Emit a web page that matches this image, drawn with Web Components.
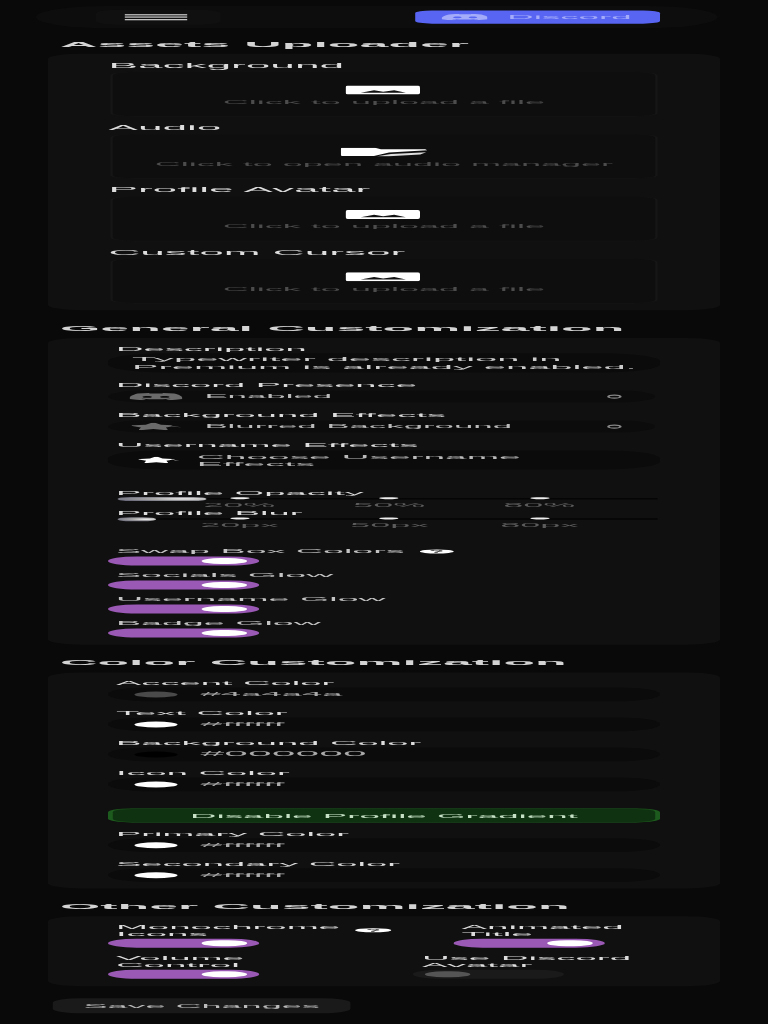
<!DOCTYPE html>
<html lang="en"><head><meta charset="utf-8"><title>Settings</title>
<style>
html,body{margin:0;padding:0;height:1024px;overflow:hidden;background:#090909;}
body{font-family:"Liberation Sans",Arial,sans-serif;color:#ccc;}
</style></head>
<body>
<app-page>
  <nav-bar></nav-bar>
  <section-block heading="Assets Uploader" style="--mt:16px;--pt:18px;--pb:18px;--px:25.4px">
    <field-label>Background</field-label>
    <upload-zone kind="image" text="Click to upload a file"></upload-zone>
    <field-label style="--lmt:16px" flush>Audio</field-label>
    <upload-zone kind="folder" text="Click to open audio manager"></upload-zone>
    <field-label style="--lmt:16px" flush>Profile Avatar</field-label>
    <upload-zone kind="image" text="Click to upload a file"></upload-zone>
    <field-label style="--lmt:16px" flush>Custom Cursor</field-label>
    <upload-zone kind="image" text="Click to upload a file"></upload-zone>
  </section-block>
  <section-block heading="General Customization" style="--pt:19px;--pb:19px">
    <field-label inset>Description</field-label>
    <text-box>Typewriter description in<br>Premium is already enabled.</text-box>
    <field-label inset style="--lmt:22px;--lmb:4px">Discord Presence</field-label>
    <select-row icon="discord">Enabled</select-row>
    <field-label inset style="--lmt:22px;--lmb:4px">Background Effects</field-label>
    <select-row icon="wand">Blurred Background</select-row>
    <field-label inset style="--lmt:22px;--lmb:4px">Username Effects</field-label>
    <text-box star>Choose Username<br>Effects</text-box>
    <field-label inset style="--lmt:50px">Profile Opacity</field-label>
    <range-row fill="37" a="20%" b="50%" c="80%"></range-row>
    <field-label inset>Profile Blur</field-label>
    <range-row fill="16" a="20px" b="50px" c="80px"></range-row>
    <toggle-field style="--tmt:49px" help on>Swap Box Colors</toggle-field>
    <toggle-field style="--tmt:15px" on>Socials Glow</toggle-field>
    <toggle-field style="--tmt:15px" on>Username Glow</toggle-field>
    <toggle-field style="--tmt:15px" on>Badge Glow</toggle-field>
  </section-block>
  <section-block heading="Color Customization" style="--pt:16px;--pb:17px">
    <field-label inset style="--lmb:2px">Accent Color</field-label>
    <color-row color="#4a4a4a" style="--fs:15.2px">#4a4a4a</color-row>
    <field-label inset style="--lmt:19px;--lmb:2px">Text Color</field-label>
    <color-row color="#ffffff">#ffffff</color-row>
    <field-label inset style="--lmt:19px;--lmb:2px">Background Color</field-label>
    <color-row color="#000000" style="--fs:17.8px">#000000</color-row>
    <field-label inset style="--lmt:19px;--lmb:2px">Icon Color</field-label>
    <color-row color="#ffffff">#ffffff</color-row>
    <green-button>Disable Profile Gradient</green-button>
    <field-label inset style="--lmt:18px;--lmb:2px">Primary Color</field-label>
    <color-row color="#ffffff">#ffffff</color-row>
    <field-label inset style="--lmt:19px;--lmb:2px">Secondary Color</field-label>
    <color-row color="#ffffff">#ffffff</color-row>
  </section-block>
  <section-block heading="Other Customization" style="--pt:18px;--pb:20px">
    <option-grid>
      <toggle-field style="--w:144px;--lw:94px" help on two>Monochrome Icons</toggle-field>
      <toggle-field style="--lw:70px" on two>Animated Title</toggle-field>
    </option-grid>
    <option-grid style="--gmt:17px">
      <toggle-field style="--w:127.5px;--lw:60px" on two>Volume Control</toggle-field>
      <toggle-field style="--lw:90px" two>Use Discord Avatar</toggle-field>
    </option-grid>
  </section-block>
  <save-button>Save Changes</save-button>
</app-page>
<script>
const FS = {
 image:'<svg viewBox="0 0 222 27" width="31" height="24" preserveAspectRatio="none"><rect width="222" height="27" rx="6" fill="#fff"/><path d="M45 22 85 14 112 19 145 14 180 22Z" fill="#111"/></svg>',
 folder:'<svg viewBox="0 0 86 9" width="36" height="24" preserveAspectRatio="none"><path fill="#fff" d="M1.5 0H34L40 1.6H84L86 2.6 48 4.8 33 8.2H1.5Q0 8.2 0 7V1.2Q0 0 1.5 0Z"/><path fill="#ddd" d="M36 8.4 50 6.2 85 4.6 79 6.8 48 8.4Z"/></svg>',
 discord:(c,w,h)=>`<svg viewBox="0 0 127.14 96.36" width="${w}" height="${h}" preserveAspectRatio="none"><path fill="${c}" d="M107.7,8.07A105.15,105.15,0,0,0,81.47,0a72.06,72.06,0,0,0-3.36,6.83A97.68,97.68,0,0,0,49,6.83,72.37,72.37,0,0,0,45.64,0,105.89,105.89,0,0,0,19.39,8.09C2.79,32.65-1.71,56.6.54,80.21h0A105.73,105.73,0,0,0,32.71,96.36,77.7,77.7,0,0,0,39.6,85.25a68.42,68.42,0,0,1-10.85-5.18c.91-.66,1.8-1.34,2.66-2a75.57,75.57,0,0,0,64.32,0c.87.71,1.76,1.39,2.66,2a68.68,68.68,0,0,1-10.87,5.19,77,77,0,0,0,6.89,11.1A105.25,105.25,0,0,0,126.6,80.22h0C129.24,52.84,122.09,29.11,107.7,8.07ZM42.45,65.69C36.18,65.69,31,60,31,53s5-12.74,11.43-12.74S54,46,53.89,53,48.84,65.69,42.45,65.69Zm42.24,0C78.41,65.69,73.25,60,73.25,53s5-12.74,11.44-12.74S96.23,46,96.12,53,91.08,65.69,84.69,65.69Z"/></svg>`,
 star:(c,w,h)=>`<svg viewBox="0 0 640 512" width="${w}" height="${h}" preserveAspectRatio="none"><path fill="${c}" d="M316.9 18C311.6 7 300.4 0 288.1 0s-23.4 7-28.8 18L195 150.3 51.4 171.5c-12 1.8-22 10.2-25.7 21.7s-.7 24.2 7.9 32.7L137.8 329 113.2 474.7c-2 12 3 24.2 12.9 31.3s23 8 33.8 2.3l128.3-68.5 128.3 68.5c10.8 5.7 23.9 4.9 33.8-2.3s14.9-19.3 12.9-31.3L438.5 329 542.7 225.9 630 340 500 230 524.9 171.5 381.2 150.3 316.9 18z"/></svg>`
};
function def(name, css, html){
  customElements.define(name, class extends HTMLElement{
    connectedCallback(){
      if(this.shadowRoot) return;
      const r=this.attachShadow({mode:'open'});
      r.innerHTML='<style>'+css+'</style>'+(typeof html==='function'?html(this):html);
    }
  });
}
def('app-page',`:host{display:block;width:768px;height:1024px;overflow:clip;contain:strict;filter:blur(.3px);background:#090909}
.s{display:flex;flex-direction:column;width:320px;height:2730px;padding-top:16px;box-sizing:border-box;overflow:clip;transform:scale(2.4,.375);transform-origin:0 0}`,'<div class="s"><slot></slot></div>');
def('nav-bar',`:host{display:flex;align-items:center;justify-content:space-between;box-sizing:border-box;width:284.6px;height:59px;margin-left:14.6px;padding:0 23.75px 0 25px;background:#0d0d0d;border-radius:30px/30px;flex:none}
.m{width:52px;height:40px;background:#101010;border-radius:10px;display:flex;align-items:center;justify-content:center}
.l{width:26px;height:16px;display:flex;flex-direction:column;justify-content:space-between;margin-left:-1px}
.l i{display:block;height:3px;background:#ddd}
.d{display:flex;align-items:center;box-sizing:border-box;width:102.5px;height:35px;padding-left:10.8px;gap:8px;background:#5865f2;border-radius:7px;color:#a4acf9;font-size:15.3px;letter-spacing:0}`,
()=>`<div class="m"><div class="l"><i></i><i></i><i></i></div></div><div class="d">${FS.discord('#a4acf9',19.6,17)}<span>Discord</span></div>`);
def('section-block',`:host{display:block;flex:none;margin-top:var(--mt,22px)}
h2{margin:0 0 0 25px;height:52px;line-height:52px;font-size:21.6px;font-weight:700;color:#d4d4d4;white-space:nowrap}
.c{box-sizing:border-box;margin-left:20.4px;width:279.2px;padding:var(--pt,14px) var(--px,24.6px) var(--pb,16px);background:#101010;border-radius:14px;display:flex;flex-direction:column}`,
h=>`<h2>${h.getAttribute('heading')}</h2><div class="c"><slot></slot></div>`);
def('field-label',`:host{display:block;height:22px;line-height:28px;font-size:18.4px;color:#ddd;white-space:nowrap;margin-top:var(--lmt,0);margin-bottom:var(--lmb,0);margin-left:-.6px}
:host([inset]){margin-left:0;padding-left:3.3px;font-size:15.9px;line-height:23px}
:host([flush]){margin-bottom:8px}
:host(:not([inset]):not([flush])){margin-bottom:8px}`,'<slot></slot>');
def('upload-zone',`:host{display:flex;flex-direction:column;align-items:center;box-sizing:border-box;height:120px;padding-top:36px;background:#0e0e0e;border:1px solid #161616;border-radius:10px}
svg{display:block;height:24px}
p{margin:9px 0 0;height:22px;line-height:22px;font-size:15px;color:#4c4c4c;white-space:nowrap}`,
h=>(h.getAttribute('kind')==='folder'?FS.folder:FS.image)+`<p>${h.getAttribute('text')}</p>`);
def('text-box',`:host{display:flex;align-items:center;box-sizing:border-box;height:51px;padding-left:10px;background:#0b0b0b;border-radius:24px/22px;font-size:16.6px;line-height:21px;color:#ccc;white-space:nowrap}
:host([star]){padding-left:12.5px;gap:6.5px;font-size:16.2px;line-height:19px;color:#bbb}
svg{flex:none}`,
h=>(h.hasAttribute('star')?FS.star('#fff',18,17):'')+'<div><slot></slot></div>');
def('select-row',`:host{display:flex;align-items:center;box-sizing:border-box;width:228px;height:32px;padding:0 14px 0 9px;gap:9.2px;background:#0c0c0c;border-radius:16px;font-size:14.5px;color:#bbb;white-space:nowrap}
.s{flex:1}.a{box-sizing:border-box;width:6.25px;height:11px;border:solid #888;border-width:3px 1px;border-radius:50%}
svg{flex:none}`,
h=>(h.getAttribute('icon')==='discord'?FS.discord('#6a6a6a',22,19):FS.star('#6a6a6a',22,20))+'<span class="s"><slot></slot></span><i class="a"></i>');
def('range-row',`:host{display:block;position:relative;height:32px;margin-left:4px;width:225px}
.t{position:absolute;left:0;right:0;top:4px;height:4px;background:#050505}
.f{position:absolute;left:0;top:.5px;height:11px;border-radius:6px;background:radial-gradient(ellipse at 75% 50%,#fff 0,#aaa 35%,#667 85%)}
.g{display:grid;grid-template-columns:repeat(3,62.5px);padding-left:19.5px;justify-items:center;position:relative}
.g i{display:block;width:8px;height:5px;background:#eee;border-radius:3px;margin-top:2px}
.g b{font-weight:400;font-size:15px;line-height:18px;margin-top:6px;color:#5c5c5c}
.g div{display:flex;flex-direction:column;align-items:center}`,
h=>`<div class="t"></div><div class="f" style="width:${h.getAttribute('fill')}px"></div><div class="g"><div><i></i><b>${h.getAttribute('a')}</b></div><div><i></i><b>${h.getAttribute('b')}</b></div><div><i></i><b>${h.getAttribute('c')}</b></div></div>`);
def('toggle-field',`:host{display:block;margin-top:var(--tmt,0);width:var(--w,auto);flex:none}
.h{display:flex;align-items:center;gap:6px;padding-left:3.3px;margin-bottom:3px;font-size:15.7px;color:#c4c4c4}
.x{line-height:22px;white-space:nowrap}
:host([two]) .h{font-size:16px}
:host([two]) .x{width:var(--lw,auto);white-space:normal;line-height:19.5px;color:#ddd}
.q{width:14.6px;height:11px;border-radius:50%;background:#fff;color:#333;font-size:10px;line-height:11px;text-align:center;font-weight:700;flex:none}
.t{position:relative;width:63px;height:24px;border-radius:12px;background:#1a1a1a}
:host([on]) .t{background:#9b59b6}
.k{position:absolute;top:4px;left:4.6px;width:19px;height:16px;border-radius:8px;background:#555}
:host([on]) .k{left:auto;right:4.6px;background:#fff}`,
h=>`<div class="h"><span class="x"><slot></slot></span>${h.hasAttribute('help')?'<span class="q">?</span>':''}</div><div class="t"><div class="k"></div></div>`);
def('color-row',`:host{display:flex;align-items:center;box-sizing:border-box;height:37px;padding-left:11px;gap:9.6px;background:#0b0b0b;border-radius:18px;font-size:var(--fs,16.4px);color:#aaa}
i{display:block;width:18px;height:16px;border-radius:50%}`,
h=>`<i style="background:${h.getAttribute('color')}"></i><span><slot></slot></span>`);
def('green-button',`:host{display:flex;align-items:center;justify-content:center;box-sizing:border-box;height:37px;margin-top:46px;background:#0f3310;border:solid #1d5a1d;border-width:1px 2px;border-radius:10px;font-size:15.3px;color:#c6e0c6;white-space:nowrap}`,'<slot></slot>');
def('option-grid',`:host{display:flex;margin-top:var(--gmt,0)}`,'<slot></slot>');
def('save-button',`:host{display:flex;align-items:center;justify-content:center;flex:none;box-sizing:border-box;width:124px;height:40px;margin:32px 0 0 22px;background:#1a1a1a;border-radius:12px;font-size:15px;color:#bbb;white-space:nowrap}`,'<slot></slot>');
</script>
</body></html>
